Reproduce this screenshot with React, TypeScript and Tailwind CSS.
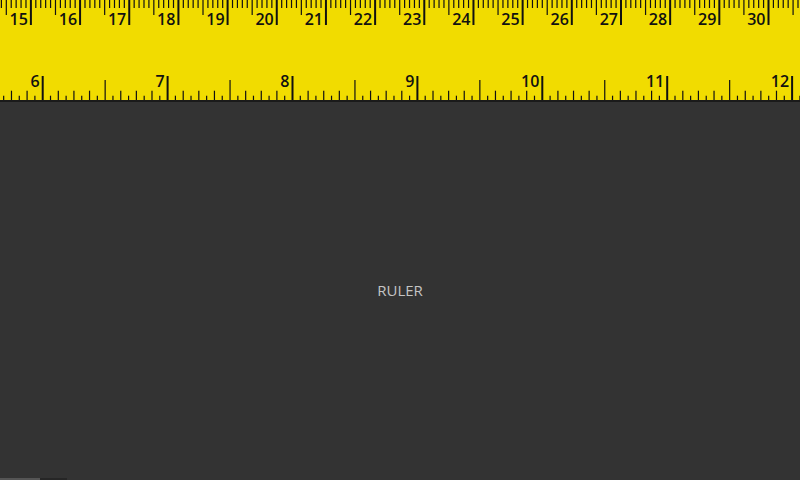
import React from "react";

// scale: both edges share the same zero point
const PX_PER_INCH = 124.9;
const PX_PER_CM = PX_PER_INCH / 2.54;
const ORIGIN = -706.7;

const FONT = "'Open Sans', 'Noto Sans', sans-serif";

function cmTicks() {
  const ticks: React.ReactNode[] = [];
  for (let mm = 140; mm <= 316; mm++) {
    const x = ORIGIN + (mm / 10) * PX_PER_CM;
    if (x < -2 || x > 802) continue;
    const major = mm % 10 === 0;
    const half = mm % 5 === 0;
    const len = major ? 25 : half ? 15 : 8;
    ticks.push(
      <line
        key={`mm${mm}`}
        x1={x}
        x2={x}
        y1={0}
        y2={len}
        stroke="#111"
        strokeWidth={major ? 2 : 1.2}
      />
    );
    if (major) {
      ticks.push(
        <text
          key={`cm${mm}`}
          x={x - 3}
          y={25}
          textAnchor="end"
          fontSize={16}
          fontWeight={600}
          fill="#111"
          fontFamily={FONT}
        >
          {mm / 10}
        </text>
      );
    }
  }
  return ticks;
}

function inchTicks() {
  const ticks: React.ReactNode[] = [];
  for (let s = 5 * 16; s <= 13 * 16; s++) {
    const x = ORIGIN + (s / 16) * PX_PER_INCH;
    if (x < -2 || x > 802) continue;
    const inch = s % 16 === 0;
    const half = s % 8 === 0;
    const eighth = s % 2 === 0;
    const len = inch ? 24 : half ? 20 : eighth ? 9.3 : 4.3;
    ticks.push(
      <line
        key={`s${s}`}
        x1={x}
        x2={x}
        y1={100 - len}
        y2={100}
        stroke="#111"
        strokeWidth={inch ? 2 : 1.2}
      />
    );
    if (inch) {
      ticks.push(
        <text
          key={`in${s}`}
          x={x - 3}
          y={87}
          textAnchor="end"
          fontSize={16}
          fontWeight={600}
          fill="#111"
          fontFamily={FONT}
        >
          {s / 16}
        </text>
      );
    }
  }
  return ticks;
}

function Ruler() {
  return (
    <div className="h-[102px] w-full shrink-0 border-b-2 border-[#1a1a1a] bg-[#f1dc00]">
      <svg width={800} height={100} viewBox="0 0 800 100" className="block">
        {cmTicks()}
        {inchTicks()}
      </svg>
    </div>
  );
}

export default function App() {
  return (
    <div className="flex h-[480px] w-[800px] flex-col overflow-hidden bg-[#333333]">
      <Ruler />
      <div className="flex flex-1 items-center justify-center">
        <span
          className="text-[15px] text-[#c4c4c4]"
          style={{ fontFamily: FONT }}
        >
          RULER
        </span>
      </div>
      <div className="flex h-[2px] shrink-0">
        <div className="w-[40px] bg-[#555]" />
        <div className="w-[27px] bg-[#262626]" />
      </div>
    </div>
  );
}
